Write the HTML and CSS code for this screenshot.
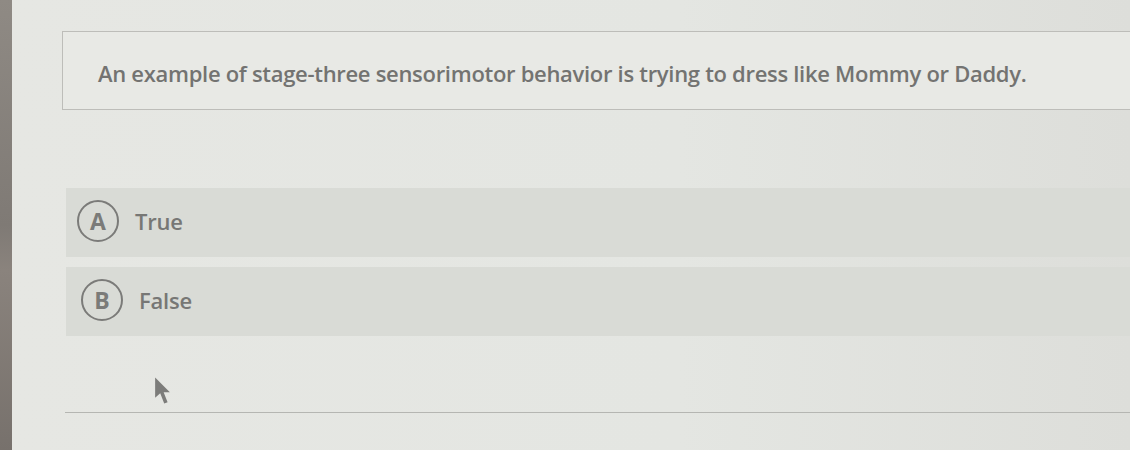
FILE: index.html
```html
<!DOCTYPE html>
<html lang="en">
<head>
  <meta charset="UTF-8" />
  <title>Question</title>
  <link rel="stylesheet" href="styles.css">
</head>
<body>
  <div class="bezel"></div>

  <main class="screen">
    <!-- Question prompt -->
    <div class="question">
      <p>An example of stage-three sensorimotor behavior is trying to dress like Mommy or Daddy.</p>
    </div>

    <!-- Answer choices -->
    <div class="choices">
      <div class="choice">
        <span class="letter">A</span>
        <span class="label">True</span>
      </div>
      <div class="choice choice-b">
        <span class="letter">B</span>
        <span class="label">False</span>
      </div>
    </div>

    <div class="footer-line"></div>

    <svg class="cursor" width="17" height="30" viewBox="0 0 15 26">
      <path d="M1 1 L1 19 L5.5 15 L9 24 L12 23 L8.5 14 L14 14 Z" fill="#7c7c7a"/>
    </svg>
  </main>
</body>
</html>
```

FILE: styles.css
```css
body {
  margin: 0;
  height: 450px;
  display: flex;
  font-family: 'Open Sans', 'Noto Sans', sans-serif;
  background: linear-gradient(90deg, #e6e7e3 0%, #e4e6e2 60%, #dddeda 100%);
  overflow: hidden;
}

.bezel {
  width: 12px;
  flex-shrink: 0;
  background: linear-gradient(180deg, #8f8a84 0%, #7f7a75 50%, #8a837d 60%, #77716c 100%);
}

.screen {
  flex: 1;
  position: relative;
  padding-left: 50px;
  padding-top: 31px;
}

/* Question */
.question {
  height: 79px;
  border: 1px solid #bdbdb9;
  border-right: none;
  box-sizing: border-box;
  padding: 26px 0 0 35px;
  background: #e8e9e5;
}

.question p {
  margin: 0;
  font-size: 22px;
  font-weight: 600;
  line-height: 30px;
  color: #737371;
  white-space: nowrap;
  letter-spacing: -0.3px;
}

/* Choices */
.choices {
  margin-top: 78px;
  margin-left: 4px;
  display: flex;
  flex-direction: column;
  gap: 10px;
}

.choice {
  height: 69px;
  background: #d9dbd6;
  display: flex;
  align-items: center;
  padding: 0 0 4px 11px;
  box-sizing: border-box;
  gap: 16px;
}

.choice-b {
  padding-left: 15px;
}

.letter {
  width: 38px;
  height: 38px;
  border: 2.5px solid #7b7b79;
  border-radius: 50%;
  display: flex;
  align-items: center;
  justify-content: center;
  font-size: 23px;
  font-weight: 700;
  color: #7b7b79;
}

.label {
  font-size: 22px;
  font-weight: 600;
  line-height: 30px;
  color: #777775;
  letter-spacing: -0.2px;
}

.footer-line {
  margin-top: 76px;
  margin-left: 3px;
  border-top: 1px solid #b5b6b2;
}

.cursor {
  position: absolute;
  left: 142px;
  top: 376px;
}
```
